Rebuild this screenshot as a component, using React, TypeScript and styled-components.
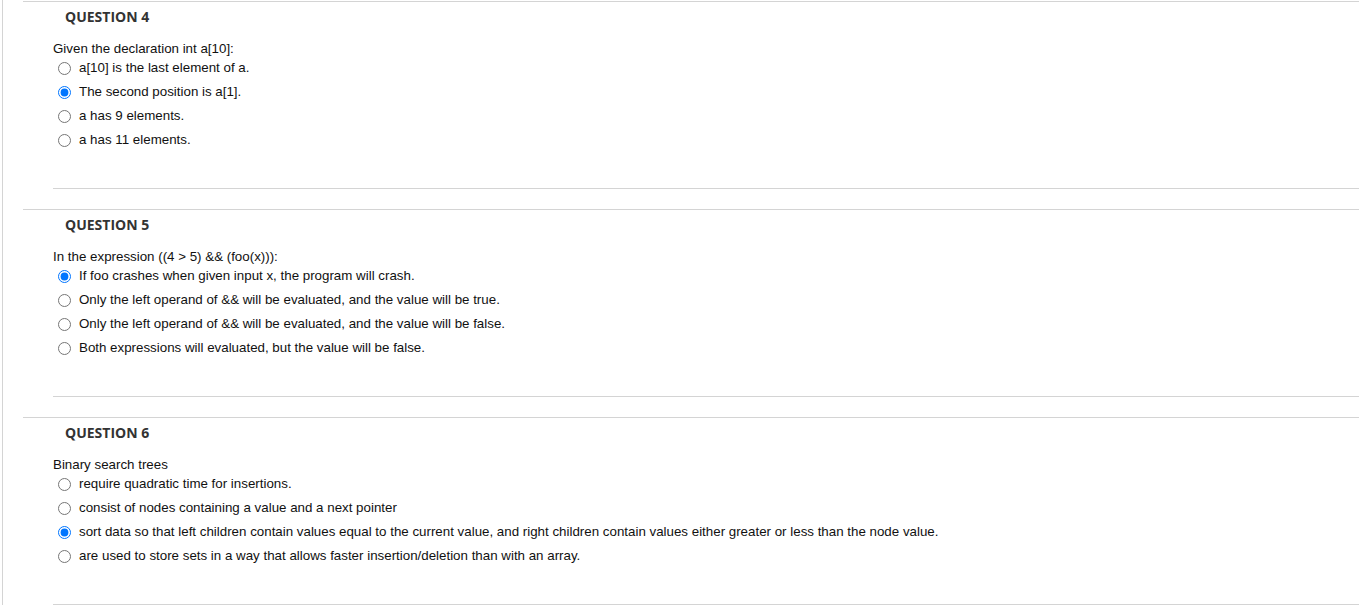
import React from "react";
import styled, { createGlobalStyle } from "styled-components";

const Global = createGlobalStyle`
  html, body { margin: 0; padding: 0; background: #fff; }
  body { font-family: "Liberation Sans", Arial, sans-serif; }
`;

const Page = styled.div`
  margin-left: 2px;
  border-left: 1px solid #d4d4d4;
  min-height: 605px;
  padding-top: 1px;
  padding-left: 20px;
  box-sizing: border-box;
`;

const Block = styled.section`
  border-top: 1px solid #d4d4d4;
  padding-top: 5px;
  margin-bottom: 20px;
`;

const Header = styled.h3`
  margin: 0 0 0 42px;
  font-family: "Open Sans", sans-serif;
  font-weight: 700;
  font-size: 14px;
  line-height: 20px;
  color: #333;
`;

const Body = styled.div`
  margin-left: 30px;
  padding-top: 14px;
  padding-bottom: 36px;
  border-bottom: 1px solid #d4d4d4;
`;

const Prompt = styled.div`
  font-size: 13.33px;
  line-height: 15px;
  color: #111;
`;

const Options = styled.ul`
  list-style: none;
  margin: 0;
  padding: 0;
`;

const Option = styled.li`
  height: 24px;
  display: flex;
  align-items: center;
`;

const Label = styled.label`
  display: flex;
  align-items: center;
  gap: 8px;
  font-size: 13.33px;
  line-height: 16px;
  color: #111;
`;

const Radio = styled.input`
  margin: 0 0 0 5px;
  width: 13px;
  height: 13px;
`;

type Q = { n: number; prompt: string; options: string[]; checked: number };

const questions: Q[] = [
  {
    n: 4,
    prompt: "Given the declaration int a[10]:",
    options: [
      "a[10] is the last element of a.",
      "The second position is a[1].",
      "a has 9 elements.",
      "a has 11 elements.",
    ],
    checked: 1,
  },
  {
    n: 5,
    prompt: "In the expression ((4 > 5) && (foo(x))):",
    options: [
      "If foo crashes when given input x, the program will crash.",
      "Only the left operand of && will be evaluated, and the value will be true.",
      "Only the left operand of && will be evaluated, and the value will be false.",
      "Both expressions will evaluated, but the value will be false.",
    ],
    checked: 0,
  },
  {
    n: 6,
    prompt: "Binary search trees",
    options: [
      "require quadratic time for insertions.",
      "consist of nodes containing a value and a next pointer",
      "sort data so that left children contain values equal to the current value, and right children contain values either greater or less than the node value.",
      "are used to store sets in a way that allows faster insertion/deletion than with an array.",
    ],
    checked: 2,
  },
];

export default function App() {
  return (
    <>
      <Global />
      <Page>
        {questions.map((q) => (
          <Block key={q.n}>
            <Header>QUESTION {q.n}</Header>
            <Body>
              <Prompt>{q.prompt}</Prompt>
              <Options>
                {q.options.map((o, i) => (
                  <Option key={i}>
                    <Label>
                      <Radio
                        type="radio"
                        name={`q${q.n}`}
                        defaultChecked={i === q.checked}
                      />
                      {o}
                    </Label>
                  </Option>
                ))}
              </Options>
            </Body>
          </Block>
        ))}
      </Page>
    </>
  );
}
